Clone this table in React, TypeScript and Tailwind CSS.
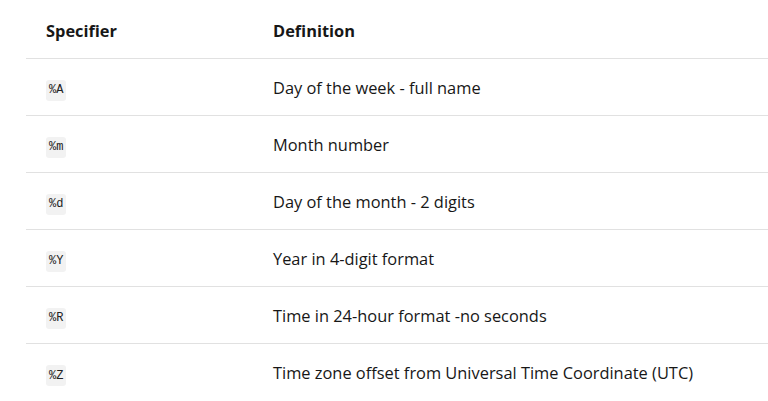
import React from "react";

const rows: [string, string][] = [
  ["%A", "Day of the week - full name"],
  ["%m", "Month number"],
  ["%d", "Day of the month - 2 digits"],
  ["%Y", "Year in 4-digit format"],
  ["%R", "Time in 24-hour format -no seconds"],
  ["%Z", "Time zone offset from Universal Time Coordinate (UTC)"],
];

export default function App() {
  return (
    <div className="w-[768px] h-[401px] bg-white overflow-hidden pl-[26px] text-[#171717] [font-family:'Open_Sans','Noto_Sans',sans-serif]">
      <table className="w-full border-collapse text-left">
        <thead>
          <tr className="h-[58px] border-b border-[#e1e1e1]">
            <th className="w-[247px] pl-[20px] pt-[6px] align-middle text-[16.4px] font-bold">Specifier</th>
            <th className="pt-[6px] align-middle text-[16.4px] font-bold">Definition</th>
          </tr>
        </thead>
        <tbody>
          {rows.map(([code, def], i) => (
            <tr key={code} className={`h-[57px] ${i < rows.length - 1 ? "border-b border-[#e1e1e1]" : ""}`}>
              <td className="pl-[20px] pt-[3px] align-middle">
                <code className="inline-flex h-[21px] items-center rounded-[3px] bg-[#f2f2f2] px-[3px] text-[12px] text-[#222] [font-family:'Liberation_Mono',monospace]">
                  {code}
                </code>
              </td>
              <td className="pt-[3px] align-middle text-[16.4px]">{def}</td>
            </tr>
          ))}
        </tbody>
      </table>
    </div>
  );
}
